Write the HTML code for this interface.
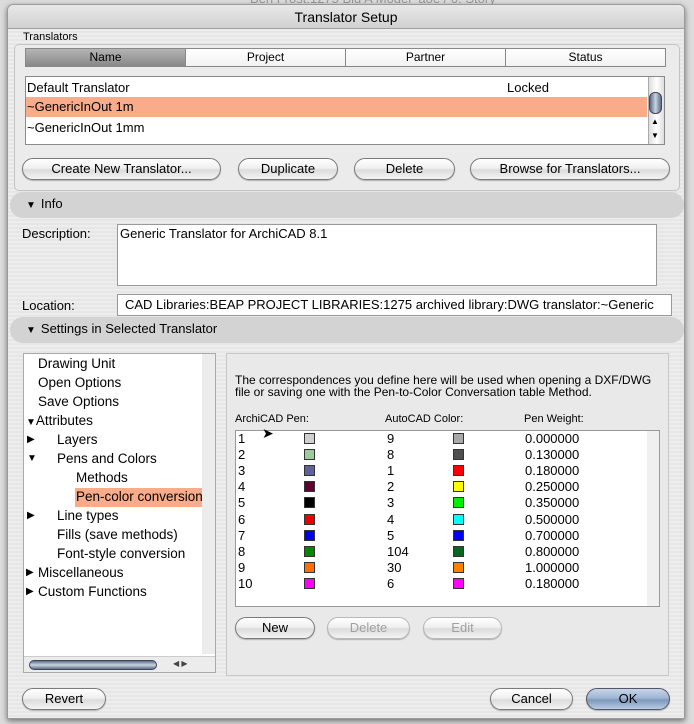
<!DOCTYPE html>
<html><head><meta charset="utf-8"><style>
*{box-sizing:border-box;margin:0;padding:0}
body{width:694px;height:724px;overflow:hidden;background:#dcdcdc;font-family:"Liberation Sans",sans-serif;font-size:13px;color:#000;position:relative}
.a{position:absolute;white-space:nowrap}
.win{position:absolute;left:7px;top:4px;width:678px;height:715px;background:repeating-linear-gradient(#ededed 0 2px,#e6e6e6 2px 4px);border:1px solid #9a9a9a;border-radius:6px 6px 0 0;box-shadow:0 2px 6px rgba(0,0,0,.5)}
.title{position:absolute;left:0;top:0;width:100%;height:24px;background:linear-gradient(#e8e8e8,#d0d0d0);border-bottom:1px solid #a0a0a0;border-radius:6px 6px 0 0;text-align:center;line-height:24px;font-size:14px}
.btn{position:absolute;height:22px;border:1px solid #7a7a7a;border-radius:11px;background:linear-gradient(#fff 0%,#f0f0f0 45%,#dcdcdc 55%,#f4f4f4 100%);text-align:center;line-height:20px;font-size:13px;box-shadow:0 1px 1px rgba(0,0,0,.25)}
.dis{color:#a0a0a0;border-color:#b8b8b8}
.bar{position:absolute;left:10px;width:674px;height:26px;background:#d3d3d3;border-radius:13px;line-height:24px;padding-left:16px;font-size:13px}
.tri{font-size:10px;margin-right:5px}
.hd{position:absolute;top:48px;height:19px;border:1px solid #888;background:linear-gradient(#fff,#f2f2f2);text-align:center;line-height:17px;font-size:12px}
.sw{position:absolute;width:11px;height:11px;border:1px solid #333}
.r{position:absolute;font-size:13px}
.t{position:absolute;white-space:nowrap;font-size:13.5px}
</style></head><body>
<div class="a" style="left:250px;top:-9px;color:#999;font-size:13px">Ben Frost:1275 Bld A Model_aoe / 0. Story</div>
<div class="win">
<div class="title">Translator Setup</div>
</div>
<div class="a" style="left:23px;top:31px;font-size:11px">Translators</div>
<div class="a" style="left:14px;top:44px;width:666px;height:147px;border:1px solid #c4c4c4;border-radius:5px;background:#ebebeb"></div>
<div class="hd" style="left:25px;width:161px;background:linear-gradient(#b4b4b4,#888);">Name</div>
<div class="hd" style="left:185px;width:161px">Project</div>
<div class="hd" style="left:345px;width:161px">Partner</div>
<div class="hd" style="left:505px;width:161px">Status</div>
<div class="a" style="left:25px;top:76px;width:640px;height:69px;background:#fff;border:1px solid #8a8a8a"></div>
<div class="a" style="left:26px;top:97px;width:621px;height:20px;background:#f8ac8a"></div>
<div class="a" style="left:27px;top:80px">Default Translator</div>
<div class="a" style="left:507px;top:80px">Locked</div>
<div class="a" style="left:27px;top:99px">~GenericInOut 1m</div>
<div class="a" style="left:27px;top:120px">~GenericInOut 1mm</div>
<div class="a" style="left:648px;top:77px;width:16px;height:67px;background:linear-gradient(90deg,#ddd,#fff,#ddd);border-left:1px solid #aaa"></div>
<div class="a" style="left:649px;top:92px;width:13px;height:22px;border-radius:6px;background:linear-gradient(90deg,#5a6e86,#c8d4e2,#5a6e86);border:1px solid #445"></div>
<div class="a" style="left:651px;top:117px;font-size:8px">▲</div>
<div class="a" style="left:651px;top:131px;font-size:8px">▼</div>
<div class="btn" style="left:22px;top:158px;width:199px">Create New Translator...</div>
<div class="btn" style="left:238px;top:158px;width:100px">Duplicate</div>
<div class="btn" style="left:354px;top:158px;width:101px">Delete</div>
<div class="btn" style="left:470px;top:158px;width:200px">Browse for Translators...</div>
<div class="bar" style="top:192px"><span class="tri">▼</span>Info</div>
<div class="a" style="left:22px;top:226px">Description:</div>
<div class="a" style="left:117px;top:224px;width:540px;height:62px;background:#fff;border:1px solid #999;padding:1px 2px;">Generic Translator for ArchiCAD 8.1</div>
<div class="a" style="left:22px;top:298px">Location:</div>
<div class="a" style="left:117px;top:294px;width:555px;height:22px;background:#fff;border:1px solid #999;padding:2px 7px;overflow:hidden">CAD Libraries:BEAP PROJECT LIBRARIES:1275 archived library:DWG translator:~Generic</div>
<div class="bar" style="top:317px"><span class="tri">▼</span>Settings in Selected Translator</div>
<div class="a" style="left:23px;top:353px;width:193px;height:320px;background:#fff;border:1px solid #aaa"></div>
<div class="a" style="left:202px;top:354px;width:13px;height:300px;background:#ececec"></div>
<div class="a" style="left:75px;top:488px;width:127px;height:19px;background:#f8ac8a"></div>
<div class="t" style="left:38px;top:356px">Drawing Unit</div>
<div class="t" style="left:38px;top:375px">Open Options</div>
<div class="t" style="left:38px;top:394px">Save Options</div>
<div class="t" style="left:26px;top:413px"><span style="font-size:10px">▼</span>Attributes</div>
<div class="a" style="left:27px;top:434px;font-size:10px">▶</div><div class="t" style="left:57px;top:432px">Layers</div>
<div class="a" style="left:27px;top:453px;font-size:10px">▼</div><div class="t" style="left:57px;top:451px">Pens and Colors</div>
<div class="t" style="left:76px;top:470px">Methods</div>
<div class="t" style="left:76px;top:489px;width:126px;overflow:hidden">Pen-color conversion</div>
<div class="a" style="left:27px;top:510px;font-size:10px">▶</div><div class="t" style="left:57px;top:508px">Line types</div>
<div class="t" style="left:57px;top:527px">Fills (save methods)</div>
<div class="t" style="left:57px;top:546px">Font-style conversion</div>
<div class="a" style="left:26px;top:567px;font-size:10px">▶</div><div class="t" style="left:38px;top:565px">Miscellaneous</div>
<div class="a" style="left:26px;top:586px;font-size:10px">▶</div><div class="t" style="left:38px;top:584px">Custom Functions</div>
<div class="a" style="left:24px;top:656px;width:191px;height:16px;background:#ececec;border-top:1px solid #ccc"></div>
<div class="a" style="left:29px;top:660px;width:128px;height:10px;border-radius:5px;background:linear-gradient(#5a6e86,#c8d4e2,#5a6e86);border:1px solid #445"></div>
<div class="a" style="left:173px;top:659px;font-size:8px;color:#444">◀ ▶</div>
<div class="a" style="left:226px;top:353px;width:443px;height:323px;border:1px solid #c8c8c8;background:#e9e9e9"></div>
<div class="a" style="left:235px;top:374px;font-size:12px;line-height:12px">The correspondences you define here will be used when opening a DXF/DWG<br>file or saving one with the Pen-to-Color Conversation table Method.</div>
<div class="a" style="left:235px;top:413px;font-size:11px">ArchiCAD Pen:</div>
<div class="a" style="left:385px;top:413px;font-size:11px">AutoCAD Color:</div>
<div class="a" style="left:524px;top:413px;font-size:11px">Pen Weight:</div>
<div class="a" style="left:235px;top:430px;width:425px;height:177px;background:#fff;border:1px solid #999"></div>
<div class="a" style="left:647px;top:431px;width:12px;height:175px;background:#f0f0f0"></div>
<div id="rows"></div>
<div class="a" style="left:262px;top:425px;font-size:14px">➤</div>
<div class="btn" style="left:235px;top:617px;width:80px">New</div>
<div class="btn dis" style="left:327px;top:617px;width:83px">Delete</div>
<div class="btn dis" style="left:423px;top:617px;width:79px">Edit</div>
<div class="btn" style="left:22px;top:688px;width:84px">Revert</div>
<div class="btn" style="left:490px;top:688px;width:83px">Cancel</div>
<div class="btn" style="left:586px;top:688px;width:84px;background:linear-gradient(#c6d6ea 0%,#9fb6d2 45%,#7e98bb 55%,#b8cbe4 100%);border-color:#556">OK</div>
<script>
var d=[["1","#d0d0d0","9","#a8a8a8","0.000000"],["2","#9ccc9c","8","#505050","0.130000"],["3","#60609a","1","#ff0000","0.180000"],["4","#600030","2","#ffff00","0.250000"],["5","#000000","3","#00ee00","0.350000"],["6","#ee0000","4","#00ffff","0.500000"],["7","#0000ee","5","#0000ee","0.700000"],["8","#008800","104","#006820","0.800000"],["9","#ff7000","30","#ff8000","1.000000"],["10","#ff00ff","6","#ff00ff","0.180000"]];
var h="";d.forEach(function(r,i){var y=431+i*16.1;
h+='<div class="r" style="left:238px;top:'+y+'px">'+r[0]+'</div><div class="sw" style="left:304px;top:'+(y+2)+'px;background:'+r[1]+'"></div><div class="r" style="left:387px;top:'+y+'px">'+r[2]+'</div><div class="sw" style="left:453px;top:'+(y+2)+'px;background:'+r[3]+'"></div><div class="r" style="left:525px;top:'+y+'px">'+r[4]+'</div>';});
document.getElementById("rows").innerHTML=h;
</script>
</body></html>
